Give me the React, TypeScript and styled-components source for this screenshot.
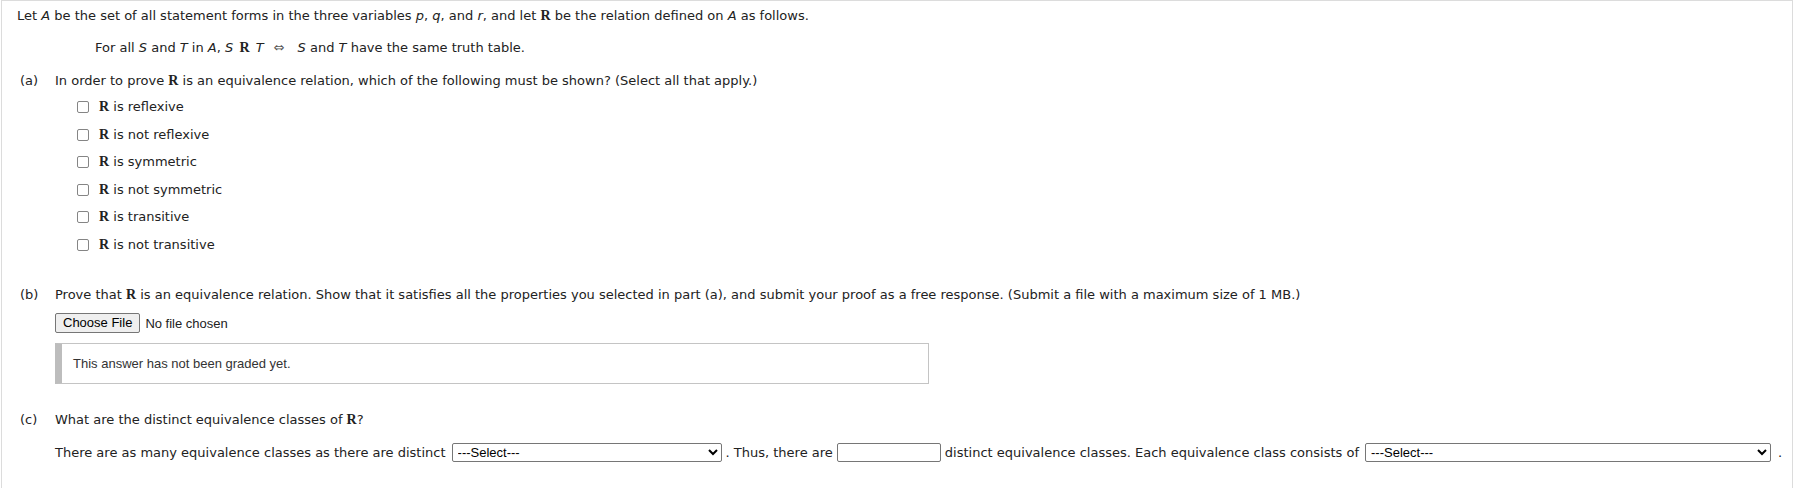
import React from 'react';
import styled, { createGlobalStyle } from 'styled-components';

const GlobalStyle = createGlobalStyle`
  html, body {
    margin: 0;
    padding: 0;
    background: #fff;
  }
  body {
    font-family: "DejaVu Sans", Verdana, sans-serif;
    font-size: 13px;
    color: #222;
  }
`;

const options = [
  'is reflexive',
  'is not reflexive',
  'is symmetric',
  'is not symmetric',
  'is transitive',
  'is not transitive',
];

const App = () => {
  return (
    <>
      <GlobalStyle />
      <Panel>
        <Intro>
          Let <Var>A</Var> be the set of all statement forms in the three variables <Var>p</Var>, <Var>q</Var>, and{' '}
          <Var>r</Var>, and let <Rel>R</Rel> be the relation defined on <Var>A</Var> as follows.
        </Intro>
        <Definition>
          For all <Var>S</Var> and <Var>T</Var> in <Var>A</Var>, <Var>S</Var> <SpacedRel>R</SpacedRel> <Var>T</Var>
          <Iff>⇔</Iff>
          <Var>S</Var> and <Var>T</Var> have the same truth table.
        </Definition>

        {/* part (a) */}
        <PartHeader $gap={17}>
          <PartLabel>(a)</PartLabel>
          <span>
            In order to prove <Rel>R</Rel> is an equivalence relation, which of the following must be shown? (Select all that apply.)
          </span>
        </PartHeader>
        <OptionList>
          {options.map((text) => (
            <Option key={text}>
              <Check type="checkbox" />
              <span>
                <Rel>R</Rel> {text}
              </span>
            </Option>
          ))}
        </OptionList>

        {/* part (b) */}
        <PartHeader $gap={34}>
          <PartLabel>(b)</PartLabel>
          <span>
            Prove that <Rel>R</Rel> is an equivalence relation. Show that it satisfies all the properties you selected in part (a), and submit your proof as a free response. (Submit a file with a maximum size of 1 MB.)
          </span>
        </PartHeader>
        <PartBody>
          <FileRow>
            <FileInput type="file" />
          </FileRow>
          <GradedBox>This answer has not been graded yet.</GradedBox>
        </PartBody>

        {/* part (c) */}
        <PartHeader $gap={28}>
          <PartLabel>(c)</PartLabel>
          <span>
            What are the distinct equivalence classes of <Rel>R</Rel>?
          </span>
        </PartHeader>
        <PartBody>
          <Sentence>
            <span>There are as many equivalence classes as there are distinct</span>
            <Select $width={270} defaultValue="">
              <option value="">---Select---</option>
            </Select>
            <span>. Thus, there are</span>
            <TextInput type="text" />
            <span>distinct equivalence classes. Each equivalence class consists of</span>
            <Select $width={406} defaultValue="">
              <option value="">---Select---</option>
            </Select>
            <Dot>.</Dot>
          </Sentence>
        </PartBody>
      </Panel>
    </>
  );
};

const Panel = styled.div`
  margin-left: 1px;
  border: 1px solid #dcdcdc;
  border-bottom: none;
  padding: 7px 0 40px 15px;
  line-height: 16px;
`;

const Intro = styled.p`
  margin: 0;
`;

const Definition = styled.p`
  margin: 16px 0 0 78px;
`;

const Var = styled.i`
  font-style: italic;
`;

const Rel = styled.b`
  font-family: "Liberation Serif", "Times New Roman", serif;
  font-weight: bold;
  font-size: 14px;
`;

const SpacedRel = styled(Rel)`
  margin: 0 2px;
`;

const Iff = styled.span`
  display: inline-block;
  font-size: 13px;
  color: #555;
  margin: 0 13px 0 10px;
`;

const PartHeader = styled.div<{ $gap: number }>`
  display: flex;
  margin-top: ${(p) => p.$gap}px;
`;

const PartLabel = styled.span`
  flex: 0 0 35px;
  margin-left: 3px;
`;

const OptionList = styled.div`
  display: flex;
  flex-direction: column;
  gap: 11.6px;
  margin-top: 10px;
  padding-left: 60px;
`;

const Option = styled.label`
  display: flex;
  align-items: center;
  gap: 10px;
  height: 16px;
`;

const Check = styled.input`
  appearance: none;
  width: 12px;
  height: 12px;
  margin: 0;
  border: 1px solid #858585;
  border-radius: 2px;
  background: #fff;
`;

const PartBody = styled.div`
  padding-left: 38px;
`;

const FileRow = styled.div`
  margin-top: 10px;
  height: 20px;
`;

const FileInput = styled.input`
  font: 13px "Liberation Sans", Arial, sans-serif;
  color: #222;
  height: 20px;

  &::file-selector-button {
    font: 13px "Liberation Sans", Arial, sans-serif;
    height: 20px;
    padding: 0 7px;
    margin-right: 5px;
    background: #efefef;
    color: #000;
    border: 1px solid #767676;
    border-radius: 2px;
  }
`;

const GradedBox = styled.div`
  box-sizing: border-box;
  display: flex;
  align-items: center;
  width: 874px;
  height: 41px;
  margin-top: 10px;
  padding-left: 11px;
  border: 1px solid #c4c4c4;
  border-left: 7px solid #bdbdbd;
  font: 13px "Liberation Sans", Arial, sans-serif;
  color: #333;
`;

const Sentence = styled.div`
  display: flex;
  align-items: center;
  height: 20px;
  margin-top: 15px;
  white-space: nowrap;
`;

const Select = styled.select<{ $width: number }>`
  box-sizing: border-box;
  width: ${(p) => p.$width}px;
  height: 19px;
  margin: 0 4px 0 6px;
  padding: 0 1px;
  font: 13px "Liberation Sans", Arial, sans-serif;
  color: #000;
  background: #fff;
  border: 1px solid #767676;
  border-radius: 2px;
`;

const TextInput = styled.input`
  box-sizing: border-box;
  width: 104px;
  height: 19px;
  margin: 0 4px;
  padding: 0 3px;
  font: 12px "Liberation Sans", Arial, sans-serif;
  border: 1px solid #767676;
  border-radius: 2px;
`;

const Dot = styled.span`
  margin-left: 3px;
`;

export default App;
